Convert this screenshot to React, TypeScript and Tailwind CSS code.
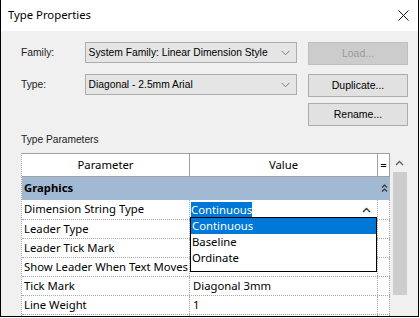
import React from "react";

// Segoe-like face for the title and the property grid, Arial-metric face for the form controls
const UI = "font-['Noto_Sans',sans-serif]";
const FORM = "font-['Liberation_Sans',Arial,sans-serif]";

/** Small grey "v" chevron used by the combo boxes. */
function ChevronDown() {
  return (
    <svg width="9" height="6" viewBox="0 0 9 6" fill="none" stroke="#7a7a7a" strokeWidth="1">
      <path d="M0.5 0.8L4.5 4.8L8.5 0.8" />
    </svg>
  );
}

function ChevronUp({ color = "#333" }: { color?: string }) {
  return (
    <svg width="9" height="6" viewBox="0 0 9 6" fill="none" stroke={color} strokeWidth="1.4">
      <path d="M1 5L4.5 1.5L8 5" />
    </svg>
  );
}

/** Double caret shown on the collapsible group row. */
function DoubleCaret() {
  return (
    <svg width="7" height="8" viewBox="0 0 7 8" fill="none" stroke="#333" strokeWidth="1.2">
      <path d="M1 3.5L3.5 1L6 3.5" />
      <path d="M1 7.5L3.5 5L6 7.5" />
    </svg>
  );
}

function Combo({ text }: { text: string }) {
  return (
    <div className="w-[214px] h-[21px] flex items-center justify-between pl-[3px] pr-[6px] bg-[#e5e5e5] border border-[#adadad] text-[10.3px] text-black whitespace-nowrap">
      <span>{text}</span>
      <ChevronDown />
    </div>
  );
}

function Button({ label, disabled }: { label: string; disabled?: boolean }) {
  return (
    <div
      className={`w-[100px] h-[23px] flex items-center justify-center border text-[10.5px] ${
        disabled
          ? "bg-[#cccccc] border-[#bfbfbf] text-[#9a9a9a]"
          : "bg-[#e1e1e1] border-[#adadad] text-black"
      }`}
    >
      {label}
    </div>
  );
}

const rows: [string, string][] = [
  ["Leader Type", ""],
  ["Leader Tick Mark", ""],
  ["Show Leader When Text Moves", ""],
  ["Tick Mark", "Diagonal 3mm"],
  ["Line Weight", "1"],
  ["", ""],
];

function DataRow({ name, value }: { name: string; value: string }) {
  return (
    <div className="flex h-[19px] border-b border-dotted border-[#a8a8a8]">
      <div className="w-[168px] shrink-0 border-r border-dotted border-[#a8a8a8] pl-[2px] flex items-center whitespace-nowrap overflow-hidden">
        {name}
      </div>
      <div className="w-[188px] shrink-0 border-r border-dotted border-[#a8a8a8] pl-[3px] flex items-center">
        {value}
      </div>
      <div className="w-[12px] shrink-0 border-r border-dotted border-[#a8a8a8]" />
    </div>
  );
}

export default function App() {
  return (
    <div className="w-[420px] h-[318px] bg-white">
      <div className="w-[419px] h-[317px] border-x border-b border-black flex flex-col bg-[#f0f0f0] overflow-hidden">
        {/* Title bar */}
        <div className={`h-[31px] shrink-0 bg-white flex items-center justify-between pl-[7px] pr-[9px] ${UI}`}>
          <span className="text-[11.3px] text-black">Type Properties</span>
          <svg width="11" height="11" viewBox="0 0 11 11" stroke="#111" strokeWidth="1">
            <path d="M0.5 0.5L10.5 10.5M10.5 0.5L0.5 10.5" />
          </svg>
        </div>

        {/* Body */}
        <div className="flex-1 flex flex-col pl-[20px] pr-[10px] pt-[11px] text-black">
          <div className={`flex items-start ${FORM}`}>
            <div className="w-[64px] h-[21px] flex items-center text-[10.3px] text-[#222]">Family:</div>
            <Combo text="System Family: Linear Dimension Style" />
            <div className="ml-[11px]">
              <Button label="Load..." disabled />
            </div>
          </div>
          <div className={`flex items-start mt-[9px] ${FORM}`}>
            <div className="w-[64px] h-[21px] flex items-center text-[10.3px] text-[#222]">Type:</div>
            <Combo text="Diagonal - 2.5mm Arial" />
            <div className="ml-[11px]">
              <Button label="Duplicate..." />
            </div>
          </div>
          <div className={`flex justify-end mt-[6px] ${FORM}`}>
            <Button label="Rename..." />
          </div>

          <div className={`mt-[7px] h-[14px] leading-[14px] text-[10.2px] text-[#222] ${FORM}`}>Type Parameters</div>

          {/* Property grid */}
          <div className={`mt-[6px] flex flex-1 min-h-0 text-[11.3px] ${UI}`}>
            <div className="relative w-[369px] shrink-0 border-l border-dotted border-[#a8a8a8] bg-white">
              {/* Header */}
              <div className="flex h-[24px] border-y border-[#a0a0a0] bg-white">
                <div className="w-[168px] shrink-0 border-r border-[#a0a0a0] flex items-center justify-center">
                  Parameter
                </div>
                <div className="w-[188px] shrink-0 border-r border-[#a0a0a0] flex items-center justify-center">
                  Value
                </div>
                <div className="w-[12px] shrink-0 border-r border-[#a0a0a0] flex items-center justify-center">
                  =
                </div>
              </div>

              {/* Group row */}
              <div className="flex h-[23px] bg-[#a2b9d4] border-b border-[#a2b9d4]">
                <div className="w-[356px] shrink-0 pl-[2px] flex items-center font-bold">Graphics</div>
                <div className="w-[12px] shrink-0 flex items-center justify-center">
                  <DoubleCaret />
                </div>
              </div>

              {/* Row being edited */}
              <div className="flex h-[20px] border-b border-dotted border-[#a8a8a8]">
                <div className="w-[168px] shrink-0 border-r border-dotted border-[#a8a8a8] pl-[2px] flex items-center">
                  Dimension String Type
                </div>
                <div className="w-[188px] shrink-0 border-r border-dotted border-[#a8a8a8] flex items-center justify-between pl-[1px] pr-[6px]">
                  <span className="bg-[#0078d7] text-white leading-[15px]">Continuous</span>
                  <ChevronUp />
                </div>
                <div className="w-[12px] shrink-0 border-r border-dotted border-[#a8a8a8]" />
              </div>

              {rows.map(([name, value], i) => (
                <DataRow key={i} name={name} value={value} />
              ))}

              {/* Open drop-down list */}
              <div className="absolute left-[168px] top-[64px] w-[187px] h-[55px] border border-black bg-white flex flex-col">
                <div className="h-[16px] bg-[#0078d7] text-white pl-[1px] flex items-center">Continuous</div>
                <div className="h-[16px] pl-[1px] flex items-center">Baseline</div>
                <div className="h-[16px] pl-[1px] flex items-center">Ordinate</div>
              </div>
            </div>

            {/* Scrollbar */}
            <div className="w-[19px] shrink-0 bg-[#f0f0f0] flex flex-col items-center">
              <div className="h-[19px] flex items-center justify-center">
                <ChevronUp color="#606060" />
              </div>
              <div className="w-[14px] h-[123px] bg-[#cdcdcd]" />
            </div>
          </div>
        </div>
      </div>
    </div>
  );
}
